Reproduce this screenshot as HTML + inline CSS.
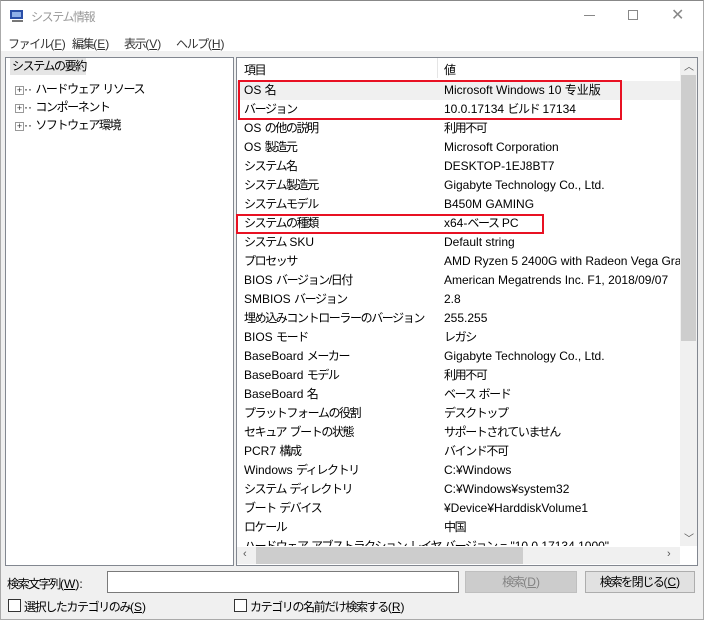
<!DOCTYPE html>
<html><head><meta charset="utf-8"><style>
*{margin:0;padding:0;box-sizing:border-box}
body{width:704px;height:620px;overflow:hidden;background:#f0f0f0;font-family:"Liberation Sans","Noto Sans CJK JP",sans-serif;font-size:12px;color:#000;position:relative}
.win{position:absolute;left:0;top:0;width:704px;height:620px;border:1px solid #aaa;border-top-color:#888}
.abs{position:absolute;white-space:nowrap}
.top{position:absolute;left:1px;top:1px;width:702px;height:50px;background:#fff}
.row{position:absolute;left:237px;width:443px;height:19px;line-height:19px;white-space:nowrap}
.row span{position:absolute;left:7px}
.row b{font-weight:normal;position:absolute;left:207px}
i{font-style:normal;letter-spacing:-1.4px}
.btn{position:absolute;height:22px;border:1px solid #adadad;background:#e1e1e1;text-align:center;line-height:20px}
.cb{position:absolute;width:13px;height:13px;border:1px solid #333;background:#fff}
</style></head><body>
<div class="win"></div>
<div class="top"></div>
<svg class="abs" style="left:9px;top:8px" width="16" height="16"><rect x="1" y="2" width="13" height="9" fill="#2a4fa8"/><rect x="3" y="4" width="9" height="5" fill="#8fb0e8"/><rect x="3" y="12" width="11" height="2" fill="#777"/></svg>
<div class="abs" style="left:31px;top:8px;color:#999"><i>システム情報</i></div>
<div class="abs" style="left:584px;top:15px;width:11px;height:1px;background:#888"></div>
<div class="abs" style="left:628px;top:10px;width:10px;height:10px;border:1px solid #888"></div>
<div class="abs" style="left:671px;top:5px;color:#888;font-size:16px">✕</div>
<div class="abs" style="left:8px;top:35px;color:#333"><i>ファイル</i>(<u>F</u>)</div>
<div class="abs" style="left:72px;top:35px;color:#333"><i>編集</i>(<u>E</u>)</div>
<div class="abs" style="left:124px;top:35px;color:#333"><i>表示</i>(<u>V</u>)</div>
<div class="abs" style="left:176px;top:35px;color:#333"><i>ヘルプ</i>(<u>H</u>)</div>

<div class="abs" style="left:5px;top:57px;width:229px;height:509px;background:#fff;border:1px solid #828790"></div>
<div class="abs" style="left:10px;top:58px;width:76px;height:17px;background:#e5e5e5;line-height:17px;padding-left:2px"><i>システムの要約</i></div>
<div class="abs" style="left:15px;top:80px;line-height:18px">
<div><span style="display:inline-block;width:9px;height:9px;border:1px solid #999;font-size:9px;line-height:7px;text-align:center;color:#333">+</span>·· <i>ハードウェア</i> <i>リソース</i></div>
<div><span style="display:inline-block;width:9px;height:9px;border:1px solid #999;font-size:9px;line-height:7px;text-align:center;color:#333">+</span>·· <i>コンポーネント</i></div>
<div><span style="display:inline-block;width:9px;height:9px;border:1px solid #999;font-size:9px;line-height:7px;text-align:center;color:#333">+</span>·· <i>ソフトウェア環境</i></div></div>

<div class="abs" style="left:236px;top:57px;width:462px;height:509px;background:#fff;border:1px solid #828790"></div>
<div class="abs" style="left:244px;top:61px"><i>項目</i></div>
<div class="abs" style="left:437px;top:58px;width:1px;height:20px;background:#e5e5e5"></div>
<div class="abs" style="left:444px;top:61px">値</div>
<div class="abs" style="left:237px;top:81px;width:443px;height:19px;background:#f0f0f0"></div>
<div style="position:absolute;left:0;top:0;height:546px;width:680px;overflow:hidden">
<div class="row" style="top:81px"><span>OS <i>名</i></span><b>Microsoft Windows 10 专业版</b></div>
<div class="row" style="top:100px"><span><i>バージョン</i></span><b>10.0.17134 <i>ビルド</i> 17134</b></div>
<div class="row" style="top:119px"><span>OS <i>の他の説明</i></span><b><i>利用不可</i></b></div>
<div class="row" style="top:138px"><span>OS <i>製造元</i></span><b>Microsoft Corporation</b></div>
<div class="row" style="top:157px"><span><i>システム名</i></span><b>DESKTOP-1EJ8BT7</b></div>
<div class="row" style="top:176px"><span><i>システム製造元</i></span><b>Gigabyte Technology Co., Ltd.</b></div>
<div class="row" style="top:195px"><span><i>システムモデル</i></span><b>B450M GAMING</b></div>
<div class="row" style="top:214px"><span><i>システムの種類</i></span><b>x64-<i>ベース</i> PC</b></div>
<div class="row" style="top:233px"><span><i>システム</i> SKU</span><b>Default string</b></div>
<div class="row" style="top:252px"><span><i>プロセッサ</i></span><b>AMD Ryzen 5 2400G with Radeon Vega Graphics</b></div>
<div class="row" style="top:271px"><span>BIOS <i>バージョン/日付</i></span><b>American Megatrends Inc. F1, 2018/09/07</b></div>
<div class="row" style="top:290px"><span>SMBIOS <i>バージョン</i></span><b>2.8</b></div>
<div class="row" style="top:309px"><span><i>埋め込みコントローラーのバージョン</i></span><b>255.255</b></div>
<div class="row" style="top:328px"><span>BIOS <i>モード</i></span><b><i>レガシ</i></b></div>
<div class="row" style="top:347px"><span>BaseBoard <i>メーカー</i></span><b>Gigabyte Technology Co., Ltd.</b></div>
<div class="row" style="top:366px"><span>BaseBoard <i>モデル</i></span><b><i>利用不可</i></b></div>
<div class="row" style="top:385px"><span>BaseBoard <i>名</i></span><b><i>ベース</i> <i>ボード</i></b></div>
<div class="row" style="top:404px"><span><i>プラットフォームの役割</i></span><b><i>デスクトップ</i></b></div>
<div class="row" style="top:423px"><span><i>セキュア</i> <i>ブートの状態</i></span><b><i>サポートされていません</i></b></div>
<div class="row" style="top:442px"><span>PCR7 <i>構成</i></span><b><i>バインド不可</i></b></div>
<div class="row" style="top:461px"><span>Windows <i>ディレクトリ</i></span><b>C:¥Windows</b></div>
<div class="row" style="top:480px"><span><i>システム</i> <i>ディレクトリ</i></span><b>C:¥Windows¥system32</b></div>
<div class="row" style="top:499px"><span><i>ブート</i> <i>デバイス</i></span><b>¥Device¥HarddiskVolume1</b></div>
<div class="row" style="top:518px"><span><i>ロケール</i></span><b><i>中国</i></b></div>
<div class="row" style="top:537px"><span><i>ハードウェア</i> <i>アブストラクション</i> <i>レイヤ</i></span><b><i>バージョン</i> = "10.0.17134.1000"</b></div>
</div>
<div class="abs" style="left:238px;top:80px;width:384px;height:40px;border:2px solid #e81123"></div>
<div class="abs" style="left:236px;top:214px;width:308px;height:20px;border:2px solid #e81123"></div>

<div class="abs" style="left:680px;top:58px;width:17px;height:488px;background:#f0f0f0"></div>
<div class="abs" style="left:681px;top:75px;width:15px;height:266px;background:#cdcdcd"></div>
<div class="abs" style="left:684px;top:58px;color:#555;font-size:10px">︿</div>
<div class="abs" style="left:684px;top:530px;color:#555;font-size:10px">﹀</div>
<div class="abs" style="left:237px;top:547px;width:443px;height:17px;background:#f0f0f0"></div>
<div class="abs" style="left:256px;top:547px;width:267px;height:17px;background:#cdcdcd"></div>
<div class="abs" style="left:243px;top:548px;color:#555;font-size:11px">‹</div>
<div class="abs" style="left:667px;top:548px;color:#555;font-size:11px">›</div>

<div class="abs" style="left:7px;top:575px"><i>検索文字列</i>(<u>W</u>):</div>
<div class="abs" style="left:107px;top:571px;width:352px;height:22px;background:#fff;border:1px solid #7a7a7a"></div>
<div class="btn" style="left:465px;top:571px;width:112px;border-color:#bfbfbf;background:#cccccc;color:#838383"><i>検索</i>(<u>D</u>)</div>
<div class="btn" style="left:585px;top:571px;width:110px"><i>検索を閉じる</i>(<u>C</u>)</div>
<div class="cb" style="left:8px;top:599px"></div>
<div class="abs" style="left:24px;top:598px"><i>選択したカテゴリのみ</i>(<u>S</u>)</div>
<div class="cb" style="left:234px;top:599px"></div>
<div class="abs" style="left:250px;top:598px"><i>カテゴリの名前だけ検索する</i>(<u>R</u>)</div>
</body></html>
